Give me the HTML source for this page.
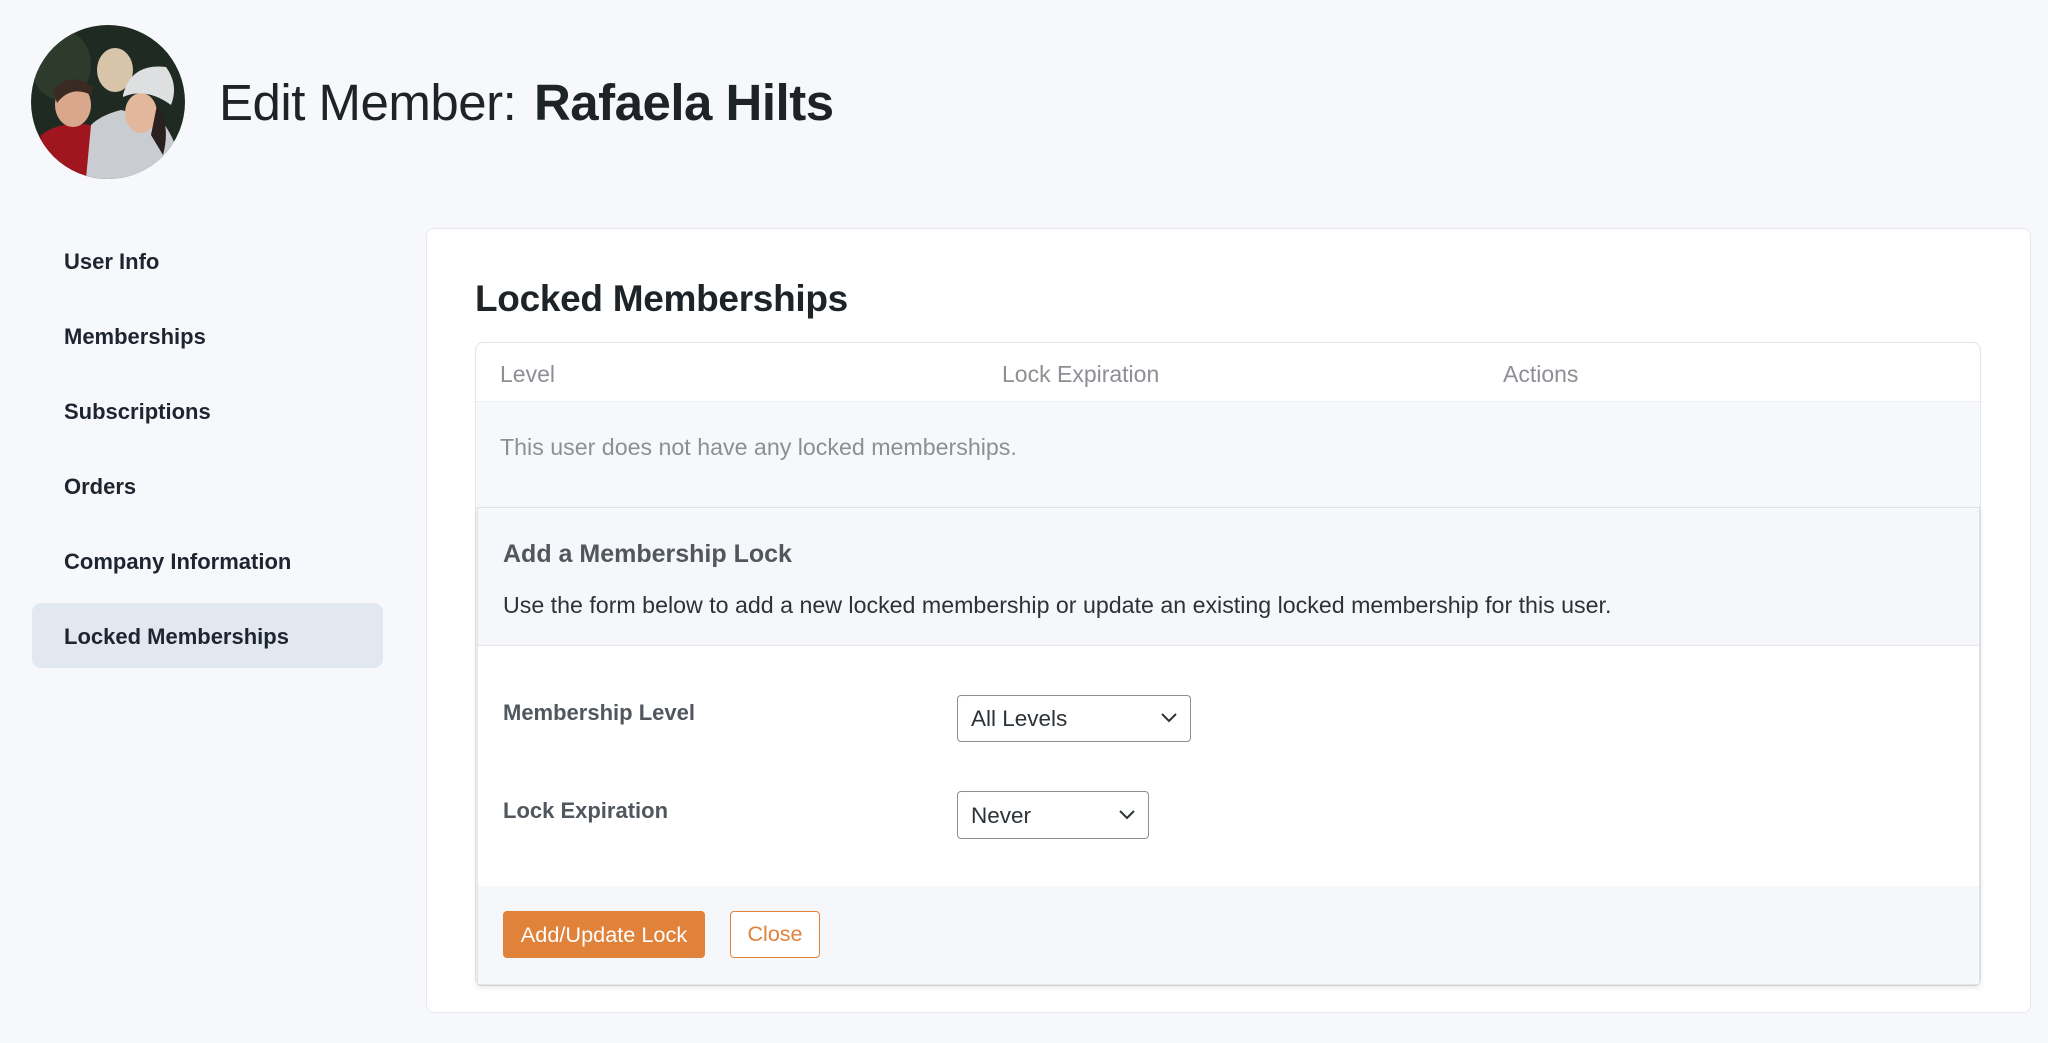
<!DOCTYPE html>
<html><head><meta charset="utf-8"><style>
*{margin:0;padding:0;box-sizing:border-box}
body{width:2048px;height:1043px;background:#f7f8fb;font-family:"Liberation Sans",sans-serif;position:relative;overflow:hidden;color:#1d2327}
.a{position:absolute;white-space:nowrap}
.nav{position:absolute;left:64px;font-size:22px;font-weight:700;color:#1e2530;line-height:1}
</style></head><body>
<svg class="a" style="left:31px;top:25px" width="154" height="154" viewBox="0 0 154 154">
<defs><clipPath id="c"><circle cx="77" cy="77" r="77"/></clipPath></defs>
<g clip-path="url(#c)">
<rect width="154" height="154" fill="#1f2a22"/>
<ellipse cx="30" cy="40" rx="30" ry="35" fill="#2d3a2c"/>
<path d="M10 110 Q30 95 60 100 L70 154 L0 154Z" fill="#a0161e"/>
<path d="M60 100 Q70 90 90 85 L130 95 Q150 120 150 154 L55 154Z" fill="#c9ccd0"/>
<ellipse cx="42" cy="80" rx="18" ry="22" fill="#d9a88c"/>
<path d="M22 65 Q40 45 62 62 L60 70 Q40 60 26 78Z" fill="#3a2a22"/>
<ellipse cx="84" cy="45" rx="18" ry="22" fill="#d8c4a8"/>
<ellipse cx="110" cy="88" rx="16" ry="20" fill="#e2b79c"/>
<path d="M92 70 Q100 38 135 42 Q148 60 140 80 Q115 62 92 72Z" fill="#dedfe0"/>
<path d="M126 80 Q140 100 132 130 L120 110Z" fill="#2a2020"/>
</g></svg>
<div class="a" style="left:219px;top:73px;font-size:51px;line-height:60px;color:#1d2327;letter-spacing:-0.5px">Edit Member: <b style="margin-left:4px">Rafaela Hilts</b></div>

<div class="a" style="left:32px;top:603px;width:351px;height:65px;background:#e2e8f0;border-radius:9px"></div>
<div class="nav" style="top:251px">User Info</div>
<div class="nav" style="top:326px">Memberships</div>
<div class="nav" style="top:401px">Subscriptions</div>
<div class="nav" style="top:476px">Orders</div>
<div class="nav" style="top:551px">Company Information</div>
<div class="nav" style="top:626px">Locked Memberships</div>

<div class="a" style="left:426px;top:228px;width:1605px;height:785px;background:#fff;border:1px solid #e6e8ec;border-radius:8px"></div>
<div class="a" style="left:475px;top:277px;font-size:37px;font-weight:700;line-height:44px;color:#1d2327;letter-spacing:-0.3px">Locked Memberships</div>

<div class="a" style="left:475px;top:342px;width:1506px;height:644px;border:1px solid #e3e5e8;border-radius:8px;background:#fff;overflow:hidden">
  <div class="a" style="left:0;top:58px;width:100%;height:108px;background:#f7f8fb;border-top:1px solid #eceef1"></div>
  <div class="a" style="left:24px;top:18px;font-size:23px;color:#8c8f94">Level</div>
  <div class="a" style="left:526px;top:18px;font-size:23px;color:#8c8f94">Lock Expiration</div>
  <div class="a" style="left:1027px;top:18px;font-size:23px;color:#8c8f94">Actions</div>
  <div class="a" style="left:24px;top:91px;font-size:23.2px;color:#8c8f94">This user does not have any locked memberships.</div>
</div>

<div class="a" style="left:477px;top:507px;width:1503px;height:477px;background:#fff;border:1px solid #dfe2e6;box-shadow:0 3px 5px rgba(0,0,0,.12)">
  <div class="a" style="left:0;top:0;width:100%;height:138px;background:#f6f7fa;border-bottom:1px solid #e3e5e8"></div>
  <div class="a" style="left:25px;top:32px;font-size:25px;font-weight:700;color:#50575e">Add a Membership Lock</div>
  <div class="a" style="left:25px;top:84px;font-size:23.2px;color:#2c3338">Use the form below to add a new locked membership or update an existing locked membership for this user.</div>
  <div class="a" style="left:25px;top:192px;font-size:22px;font-weight:700;color:#50575e">Membership Level</div>
  <div class="a" style="left:25px;top:290px;font-size:22px;font-weight:700;color:#50575e">Lock Expiration</div>
  <div class="a" style="left:479px;top:187px;width:234px;height:47px;border:1.5px solid #8c8f94;border-radius:4px;background:#fff"><span class="a" style="left:13px;top:10px;font-size:22.5px;color:#2c3338">All Levels</span>
    <svg class="a" style="left:202px;top:16px" width="18" height="12" viewBox="0 0 18 12"><path d="M2 2l7 7 7-7" fill="none" stroke="#2c3338" stroke-width="2"/></svg></div>
  <div class="a" style="left:479px;top:283px;width:192px;height:48px;border:1.5px solid #8c8f94;border-radius:4px;background:#fff"><span class="a" style="left:13px;top:11px;font-size:22.5px;color:#2c3338">Never</span>
    <svg class="a" style="left:160px;top:17px" width="18" height="12" viewBox="0 0 18 12"><path d="M2 2l7 7 7-7" fill="none" stroke="#2c3338" stroke-width="2"/></svg></div>
  <div class="a" style="left:0;top:378px;width:100%;height:98px;background:#f6f7fa"></div>
  <div class="a" style="left:25px;top:403px;width:202px;height:47px;background:#e0823a;border-radius:4px;color:#fff;font-size:21.7px;line-height:47px;text-align:center">Add/Update Lock</div>
  <div class="a" style="left:252px;top:403px;width:90px;height:47px;border:1.5px solid #e0823a;border-radius:4px;background:#fff;color:#e0823a;font-size:21.5px;line-height:44px;text-align:center">Close</div>
</div>
</body></html>
